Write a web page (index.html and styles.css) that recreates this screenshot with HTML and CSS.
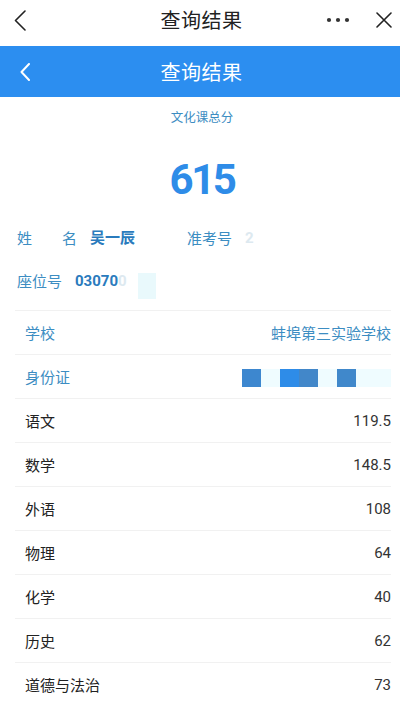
FILE: index.html
```html
<!DOCTYPE html>
<html lang="zh-CN">
<head>
<meta charset="utf-8">
<title>查询结果</title>
<link rel="stylesheet" href="styles.css">
</head>
<body>
<div class="topbar">
  <div class="side left">
    <svg width="12" height="21" viewBox="0 0 12 21"><polyline points="11,1 1.5,10.5 11,20" fill="none" stroke="#222" stroke-width="1.6" stroke-linecap="round" stroke-linejoin="round"/></svg>
  </div>
  <div class="title">查询结果</div>
  <div class="side right">
    <svg class="dots" width="24" height="6" viewBox="0 0 24 6"><circle cx="3" cy="3" r="2.1" fill="#333"/><circle cx="12" cy="3" r="2.1" fill="#333"/><circle cx="21" cy="3" r="2.1" fill="#333"/></svg>
    <svg class="close" width="16" height="16" viewBox="0 0 16 16"><path d="M1 1 L15 15 M15 1 L1 15" stroke="#222" stroke-width="1.6" stroke-linecap="round"/></svg>
  </div>
</div>
<div class="navbar">
  <div class="side left nav-left">
    <svg width="10" height="18" viewBox="0 0 10 18"><polyline points="9,1 1.5,9 9,17" fill="none" stroke="#fff" stroke-width="2" stroke-linecap="round" stroke-linejoin="round"/></svg>
  </div>
  <div class="title">查询结果</div>
  <div class="side right"></div>
</div>

<div class="summary">
  <div class="summary-label">文化课总分</div>
  <div class="score">615</div>
</div>

<div class="info">
  <div class="info-row">
    <div class="info-cell name-cell">
      <span class="label label-justify"><span>姓</span><span>名</span></span>
      <span class="value">吴一辰</span>
    </div>
    <div class="info-cell">
      <span class="label">准考号</span>
      <span class="value faint">2</span>
    </div>
  </div>
  <div class="info-row">
    <div class="info-cell">
      <span class="label">座位号</span>
      <span class="value">03070<span class="faint">0</span></span>
      <span class="smear"></span>
    </div>
  </div>
</div>

<div class="table">
  <div class="row blue">
    <span>学校</span><span>蚌埠第三实验学校</span>
  </div>
  <div class="row blue">
    <span>身份证</span>
    <span class="mosaic">
      <i class="m1"></i><i class="m0"></i><i class="m2"></i><i class="m3"></i><i class="m0"></i><i class="m4"></i><i class="m0"></i><i class="m0 last"></i>
    </span>
  </div>
  <div class="row"><span>语文</span><span class="num">119.5</span></div>
  <div class="row"><span>数学</span><span class="num">148.5</span></div>
  <div class="row"><span>外语</span><span class="num">108</span></div>
  <div class="row"><span>物理</span><span class="num">64</span></div>
  <div class="row"><span>化学</span><span class="num">40</span></div>
  <div class="row"><span>历史</span><span class="num">62</span></div>
  <div class="row"><span>道德与法治</span><span class="num">73</span></div>
</div>
</body>
</html>
```

FILE: styles.css
```css
* { box-sizing: border-box; }
html, body {
  margin: 0;
  padding: 0;
  background: #fff;
  font-family: "Noto Sans CJK SC", "Noto Sans", sans-serif;
  width: 400px;
  overflow: hidden;
}

.topbar, .navbar {
  display: flex;
  align-items: center;
}
.topbar {
  height: 46px;
  padding-bottom: 6px;
  background: #fff;
}
.navbar {
  height: 51px;
  background: #2c8ef0;
}
.side {
  width: 80px;
  display: flex;
  align-items: center;
}
.side.left { padding-left: 14px; }
.nav-left { padding-left: 20px !important; }
.side.right {
  justify-content: flex-end;
  padding-right: 8px;
}
.dots { margin-right: 26px; }
.title {
  flex: 1;
  text-align: center;
  font-size: 20px;
  line-height: 24px;
  color: #222;
  letter-spacing: 0.5px;
  padding-left: 3px;
}
.navbar .title { color: #fff; padding-top: 1px; }

.summary {
  padding-top: 11px;
  text-align: center;
}
.summary-label {
  font-size: 12.5px;
  line-height: 18px;
  color: #3c8dc2;
  padding-left: 4px;
}
.score {
  margin-top: 32px;
  font-family: Roboto, "Noto Sans", sans-serif;
  font-weight: 700;
  font-size: 42px;
  line-height: 44px;
  color: #2e8ce8;
  letter-spacing: -2.5px;
  padding-left: 4px;
}

.info {
  padding: 14px 0 0 17px;
}
.info-row {
  display: flex;
  height: 43px;
  align-items: center;
}
.info-cell {
  display: flex;
  align-items: center;
  gap: 13px;
  font-size: 15px;
  line-height: 20px;
}
.name-cell { width: 170px; }
.label { color: #3c8dc2; }
.label-justify {
  width: 60px;
  display: flex;
  justify-content: space-between;
}
.value {
  color: #2a7bbd;
  font-weight: 700;
  font-family: Roboto, "Noto Sans CJK SC", sans-serif;
}
.faint { color: #dde9f0; }
.smear {
  display: block;
  width: 18px;
  height: 26px;
  margin-left: -2px;
  background: #e9f9fc;
  margin-top: 10px;
}

.table {
  margin: 8px 9px 0 15px;
  border-top: 1px solid #f1f1f1;
}
.row {
  height: 44px;
  display: flex;
  align-items: center;
  justify-content: space-between;
  padding-left: 10px;
  border-bottom: 1px solid #f1f1f1;
  font-size: 15px;
  color: #222;
}
.row.blue { color: #3c8dc2; }
.num {
  font-family: Roboto, "Noto Sans", sans-serif;
  font-size: 15px;
  color: #333;
}
.mosaic {
  display: flex;
  height: 18px;
  margin-top: 2px;
}
.mosaic i {
  display: block;
  width: 19px;
  height: 18px;
}
.mosaic .last { width: 16px; }
.m0 { background: #effcff; }
.m1 { background: #3d87cf; }
.m2 { background: #2e8ce8; }
.m3 { background: #4287c9; }
.m4 { background: #4088cb; }
```
